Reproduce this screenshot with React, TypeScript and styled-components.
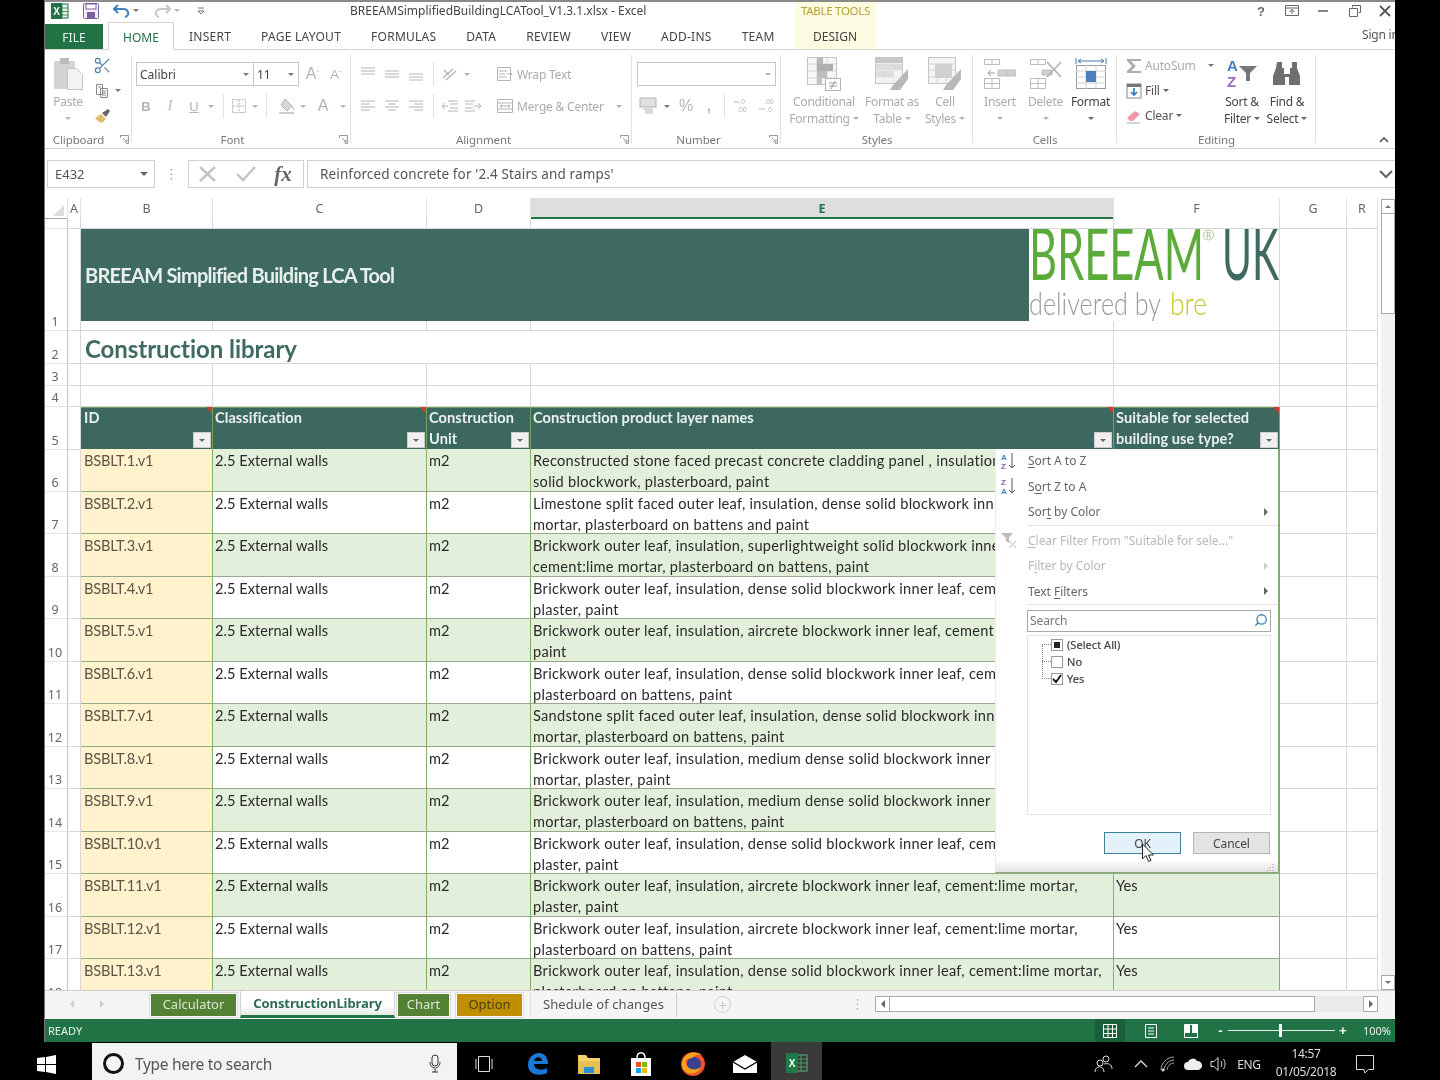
import React from 'react';
import styled, { createGlobalStyle } from 'styled-components';
import { Scissors, Search } from 'lucide-react';

const Global = createGlobalStyle`
  html, body { margin: 0; padding: 0; background: #000; }
  * { box-sizing: border-box; }
`;

const UI = `"Noto Sans", "Open Sans", sans-serif`;
const CELL = `Lato, "Open Sans", sans-serif`;
const COLS = '23px 13px 132px 214px 104px 583px 166px 67px 31px';
const GREY = '#b4b4b4';

const Page = styled.div`
  position: relative; width: 1440px; height: 1080px; background: #000; overflow: hidden;
  display: flex; flex-direction: column; filter: blur(0.3px);
`;
const Win = styled.div`
  width: 1351px; height: 1042px; margin-left: 44px; background: #fff; border-left: 1px solid #777;
  border-top: 2px solid #8a8a8a; display: flex; flex-direction: column; overflow: hidden; font-family: ${UI};
`;
const TitleBar = styled.div`height: 20px; display: flex; align-items: center; flex: none; padding-bottom: 3px;`;
const TitleText = styled.div`width: 582px; padding-left: 137px; font-size: 12px; color: #444; letter-spacing: 0; white-space: nowrap; flex: none;`;
const ToolsTitle = styled.div`width: 81px; height: 20px; align-self: flex-start; padding-bottom: 3px; background: #fdfbe2; color: #b5a035; font-size: 11.5px; letter-spacing: -0.3px; display: flex; align-items: center; justify-content: center; white-space: nowrap; flex: none;`;
const Slot = styled.div<{ $w: number }>`
  width: ${p => p.$w}px; flex: none; display: flex; align-items: center; justify-content: center; height: 100%; color: #555;
`;
const TaskSlot = styled(Slot)`padding-top: 6px;`;
const Controls = styled.div`display: flex; height: 100%; flex: none; margin-left: auto; align-items: center;`;
const TabRow = styled.div`height: 28px; display: flex; align-items: stretch; flex: none; border-bottom: 1px solid #d4d4d4;`;
const FileTab = styled.div`width: 58px; background: #217346; color: #e8f3ec; font-size: 12px; display: flex; align-items: center; justify-content: center; margin-top: 2px; padding-top: 1px;`;
const HomeTab = styled.div`width: 66px; margin-left: 5px; margin-bottom: -1px; padding-top: 2px; background: #fff; color: #217346; font-size: 12px; display: flex; align-items: center; justify-content: center; border: 1px solid #d4d4d4; border-bottom: 1px solid #fff;`;
const RibbonTab = styled.div`padding: 2px 15px 0; font-size: 12px; color: #444; display: flex; align-items: center; letter-spacing: 0.25px; white-space: nowrap;`;
const DesignTab = styled(RibbonTab)`width: 81px; margin-left: 5px; padding: 2px 0 0; justify-content: center; background: #fdfbe2; letter-spacing: 0;`;
const SignIn = styled.div`margin-left: auto; width: 33px; overflow: hidden; font-size: 12px; color: #555; display: flex; align-items: center; padding-bottom: 2px; white-space: nowrap; letter-spacing: -0.2px;`;

const Ribbon = styled.div`height: 99px; flex: none; display: flex; border-bottom: 1px solid #d4d4d4; position: relative;`;
const Group = styled.div<{ $w: number }>`
  width: ${p => p.$w}px; flex: none; display: flex; flex-direction: column; position: relative;
  &::after { content: ''; position: absolute; right: 0; top: 5px; bottom: 5px; width: 1px; background: #e0e0e0; }
`;
const GroupBody = styled.div<{ $pl?: number }>`flex: 1; display: flex; padding-left: ${p => p.$pl ?? 0}px; min-height: 0;`;
const GroupLabel = styled.div<{ $pr?: number }>`height: 17px; flex: none; font-size: 11.5px; color: #777; text-align: center; line-height: 18px; position: relative; letter-spacing: -0.1px; padding-right: ${p => p.$pr ?? 0}px;`;
const Launcher = styled.svg`position: absolute; right: 3px; top: 4px;`;
const Stack = styled.div<{ $w?: number; $pt?: number }>`display: flex; flex-direction: column; ${p => (p.$w ? `width:${p.$w}px;` : '')} padding-top: ${p => p.$pt ?? 0}px; flex: none;`;
const ToolRow = styled.div<{ $mt?: number }>`height: 24px; display: flex; align-items: center; margin-top: ${p => p.$mt ?? 0}px; flex: none;`;
const SmallRow = styled.div`height: 25px; display: flex; align-items: center; flex: none;`;
const Pick = styled.div<{ $w: number; $ml?: number }>`
  width: ${p => p.$w}px; height: 24px; margin-left: ${p => p.$ml ?? 0}px; border: 1px solid #c6c6c6; background: #fff; font-size: 12px; color: #444;
  display: flex; align-items: center; justify-content: space-between; padding: 0 4px 0 3px; flex: none;
`;
const Sep = styled.div`width: 1px; height: 24px; background: #e0e0e0; margin: 0 5px; flex: none;`;
const Caret = styled.span<{ $c?: string; $ml?: number }>`
  display: inline-block; width: 0; height: 0; border-left: 3px solid transparent; border-right: 3px solid transparent;
  border-top: 3px solid ${p => p.$c ?? GREY}; margin-left: ${p => p.$ml ?? 0}px; flex: none;
`;
const BigCaret = styled(Caret)`border-left-width: 4px; border-right-width: 4px; border-top-width: 4px;`;
const UpCaret = styled(Caret)`transform: rotate(180deg);`;
const ToolLabel = styled.span<{ $on?: boolean }>`font-size: 12px; color: ${p => (p.$on ? '#555' : '#ababab')}; white-space: nowrap; display: inline-flex; align-items: center; letter-spacing: -0.2px;`;
const Big = styled.div<{ $w: number }>`width: ${p => p.$w}px; flex: none; display: flex; flex-direction: column; align-items: center; padding-top: 4px;`;
const BigIcon = styled.div`height: 39px; display: flex; align-items: center; justify-content: center;`;
const BigLine = styled.div<{ $on?: boolean }>`height: 17px; line-height: 17px; font-size: 12px; color: ${p => (p.$on ? '#444' : '#ababab')}; white-space: nowrap; display: flex; align-items: center; gap: 3px; letter-spacing: -0.25px;`;
const Glyph = styled.span<{ $b?: boolean; $i?: boolean; $u?: boolean; $s?: number }>`
  font-family: "Liberation Serif", serif; color: ${GREY}; font-size: ${p => p.$s ?? 14}px; font-weight: ${p => (p.$b ? 700 : 400)};
  font-style: ${p => (p.$i ? 'italic' : 'normal')}; text-decoration: ${p => (p.$u ? 'underline' : 'none')};
`;
const SansGlyph = styled(Glyph)`font-family: "Liberation Sans", sans-serif;`;
const Collapse = styled.svg`position: absolute; right: 5px; bottom: 4px;`;

const FormulaZone = styled.div`height: 49px; flex: none; padding: 11px 0 10px 2px; display: flex; align-items: stretch; background: #fff;`;
const NameBox = styled.div`width: 108px; border: 1px solid #d0d0d0; font-size: 13px; color: #555; display: flex; align-items: center; justify-content: space-between; padding: 0 6px 0 7px;`;
const DotsV = styled.div`width: 33px; display: flex; align-items: center; justify-content: center;`;
const FxBox = styled.div`width: 116px; border: 1px solid #d0d0d0; display: flex; align-items: center;`;
const FormulaInput = styled.div`flex: 1; margin-left: 3px; border: 1px solid #d0d0d0; border-right: none; font-size: 13.5px; color: #555; display: flex; align-items: center; justify-content: space-between; padding: 0 2px 0 12px; letter-spacing: 0.13px;`;
const Fx = styled.span`font-family: "Liberation Serif", serif; font-style: italic; font-size: 21px; color: #666; font-weight: 700;`;

const SheetWrap = styled.div`flex: 1; display: flex; min-height: 0;`;
const SheetMain = styled.div`width: 1333px; flex: none; display: flex; flex-direction: column; min-height: 0;`;
const ColHead = styled.div`display: grid; grid-template-columns: ${COLS}; height: 21px; flex: none; border-bottom: 1px solid #a8a8a8; font-family: ${UI};`;
const ColCell = styled.div<{ $on?: boolean }>`
  font-size: 12.5px; display: flex; align-items: center; justify-content: center; padding-bottom: 1px;
  color: ${p => (p.$on ? '#217346' : '#666')}; font-weight: ${p => (p.$on ? 700 : 400)};
  background: ${p => (p.$on ? '#dedede' : '#fff')}; border-right: 1px solid ${p => (p.$on ? '#dedede' : '#e2e2e2')};
  box-shadow: ${p => (p.$on ? 'inset 0 -2px 0 #217346' : 'none')}; height: 21px;
`;
const Corner = styled.div`display: flex; align-items: flex-end; justify-content: flex-end; padding: 0 3px 3px 0; border-right: 1px solid #e2e2e2;`;
const Body = styled.div`flex: 1; overflow: hidden; min-height: 0; position: relative;`;
const Row = styled.div<{ $h: number }>`display: grid; grid-template-columns: ${COLS}; height: ${p => p.$h}px; position: relative;`;
const RowNum = styled.div`font-size: 12.5px; color: #666; display: flex; align-items: flex-end; justify-content: center; border-right: 1px solid #c4c4c4; border-bottom: 1px solid #e6e6e6; font-family: ${UI}; padding-right: 2px; line-height: 17px;`;
const Blank = styled.div`border-right: 1px solid #d8d8d8; border-bottom: 1px solid #d8d8d8; min-width: 0;`;
const Title2 = styled.div`grid-column: 3 / 6; border-bottom: 1px solid #d8d8d8; font: 700 24px ${CELL}; color: #3f6a62; display: flex; align-items: flex-end; padding-left: 4px; white-space: nowrap; letter-spacing: -0.05px; line-height: 28px;`;
const BannerBar = styled.div`position: absolute; left: 36px; top: 0; width: 948px; height: 92px; background: #3f6a62; color: #e8efec; font: 700 20px ${CELL}; display: flex; align-items: center; padding-left: 4px; letter-spacing: -0.75px; white-space: nowrap;`;
const LogoBox = styled.svg`position: absolute; left: 984px; top: 0; background: #fff; font-family: Lato, sans-serif;`;
const HeadCell = styled.div<{ $pl?: number }>`
  position: relative; background: #3c685f; color: #eaf1ee; font: 700 14.6px/21px ${CELL}; padding: 0 0 0 ${p => p.$pl ?? 2}px; white-space: pre-line;
  box-shadow: inset 0 1px 0 #6f9b5f; border-right: 1px solid #70a55a; border-bottom: 1px solid #70a55a; letter-spacing: 0.05px;
`;
const RedMark = styled.div`position: absolute; right: 0; top: 0; width: 0; height: 0; border-top: 6px solid #d23a2a; border-left: 6px solid transparent;`;
const FilterBtn = styled.div`position: absolute; right: 1px; bottom: 1px; width: 18px; height: 16px; background: #f0f0f0; border: 1px solid #ccc; display: flex; align-items: center; justify-content: center;`;
const DataCell = styled.div<{ $bg: string; $c?: string; $ls?: number; $pl?: number }>`
  background: ${p => p.$bg}; color: ${p => p.$c ?? '#2a2a2a'}; font: 400 14.6px/21px ${CELL}; padding: 1px 0 0 ${p => p.$pl ?? 2}px; overflow: hidden; white-space: nowrap;
  letter-spacing: ${p => p.$ls ?? 0}px; border-right: 1px solid #86b06a; border-bottom: 1px solid #97a98a;
`;
const VScroll = styled.div`width: 14px; margin-left: 3px; flex: none; display: flex; flex-direction: column; background: #f2f2f2; padding-top: 1px;`;
const ScrollBtn = styled.div`height: 15px; background: #fff; border: 1px solid #aaa; display: flex; align-items: center; justify-content: center; flex: none;`;
const VThumb = styled.div`height: 100px; background: #fff; border: 1px solid #aaa; border-top: none; flex: none;`;
const VRest = styled.div`flex: 1;`;

const Strip = styled.div`height: 29px; flex: none; display: flex; align-items: flex-start; background: #f5f5f5; border-top: 1px solid #d0d0d0;`;
const NavArrows = styled.div`width: 105px; height: 26px; display: flex; align-items: center; gap: 24px; padding-left: 24px; flex: none;`;
const SheetTab = styled.div<{ $w: number; $bg: string; $c: string; $ml?: number }>`
  width: ${p => p.$w}px; height: 24px; margin-top: 2px; margin-left: ${p => p.$ml ?? 0}px; background: ${p => p.$bg}; color: ${p => p.$c}; font-size: 13px; letter-spacing: 0; padding-bottom: 2px;
  display: flex; align-items: center; justify-content: center; flex: none; white-space: nowrap; border: 1px solid #fff; outline: 1px solid #ddd;
`;
const ActiveTab = styled.div`width: 155px; height: 27px; margin-left: 3px; background: linear-gradient(#fff 60%, #e2ece6); color: #2c6a52; font-size: 13px; font-weight: 700; letter-spacing: -0.08px; display: flex; align-items: center; justify-content: center; border: 1px solid #d4d4d4; border-top: none; border-bottom: 3px solid #217346; flex: none; white-space: nowrap;`;
const PlainTab = styled.div`width: 147px; height: 24px; margin-top: 2px; margin-left: 7px; padding-bottom: 2px; font-size: 13px; color: #555; letter-spacing: 0.09px; display: flex; align-items: center; justify-content: center; border-left: 1px solid #ddd; border-right: 1px solid #ccc; flex: none; white-space: nowrap;`;
const AddSheet = styled.div`width: 17px; height: 17px; margin: 5px 0 0 37px; border-radius: 50%; border: 1.5px solid #d0d0d0; color: #c4c4c4; display: flex; align-items: center; justify-content: center; font: 400 14px/1 "Liberation Sans"; flex: none;`;
const Dots2 = styled.div`margin-left: 118px; width: 16px; height: 26px; display: flex; align-items: center; justify-content: center; flex: none;`;
const HBar = styled.div`width: 503px; height: 16px; margin: 5px 0 0 10px; display: flex; background: #ebebeb; flex: none;`;
const HBtn = styled.div`width: 15px; height: 16px; background: #fff; border: 1px solid #aaa; display: flex; align-items: center; justify-content: center; flex: none;`;
const HThumb = styled.div`width: 425px; background: #fff; border: 1px solid #aaa; border-left: none; flex: none;`;
const HRest = styled.div`flex: 1;`;

const Status = styled.div`height: 23px; flex: none; background: #217346; color: #e6f2ea; display: flex; align-items: center; font-size: 11px; padding: 0 4px 0 3px; letter-spacing: 0;`;
const StatusFill = styled.div`flex: 1;`;
const ViewBtn = styled.div<{ $on?: boolean; $mr?: number }>`width: 30px; height: 23px; margin-right: ${p => p.$mr ?? 0}px; display: flex; align-items: center; justify-content: center; background: ${p => (p.$on ? '#1b5f3a' : 'transparent')}; flex: none;`;
const ZoomTrack = styled.div`width: 107px; height: 1px; background: #e6f2ea; position: relative; flex: none; margin: 0 4px;`;
const ZoomKnob = styled.div`position: absolute; left: 51px; top: -6px; width: 3px; height: 13px; background: #fff;`;
const ZoomSign = styled.span`width: 7px; text-align: center; font: 700 13px/1 "Liberation Sans", sans-serif; color: #fff; flex: none;`;
const ZoomPct = styled.span`width: 45px; text-align: right; flex: none;`;

const Taskbar = styled.div`height: 38px; flex: none; background: #000; display: flex; align-items: center; font-family: ${UI};`;
const SearchBar = styled.div`width: 365px; height: 37px; margin-top: 1px; background: #f3f3f3; display: flex; align-items: center; flex: none; padding: 4px 0 0 11px;`;
const Ring = styled.div`width: 21px; height: 21px; border-radius: 50%; border: 3px solid #111; flex: none;`;
const SearchText = styled.div`margin-left: 11px; font-size: 15.5px; color: #555; flex: 1; letter-spacing: -0.3px; white-space: nowrap;`;
const ActiveApp = styled.div`width: 51px; height: 38px; background: #3a3a3a; padding-top: 4px; display: flex; align-items: center; justify-content: center; flex: none;`;
const Eng = styled.div`font-size: 12px; color: #ddd; letter-spacing: -0.3px;`;
const Clock = styled.div`width: 70px; text-align: center; color: #ddd; font-size: 12px; line-height: 18px; letter-spacing: -0.35px; padding-top: 4px; flex: none;`;

const Dialog = styled.div`
  position: absolute; left: 995px; top: 449px; width: 285px; height: 424px; background: #fff; border-right: 2px solid #82ab6e; border-bottom: 1px solid #82ab6e;
  display: flex; flex-direction: column; font-family: ${UI}; z-index: 5; border-left: 1px solid #ececec;
`;
const MenuItem = styled.div<{ $off?: boolean; $first?: boolean }>`
  height: 25.5px; flex: none; display: flex; align-items: center; color: ${p => (p.$off ? '#b8b8b8' : '#666')}; font-size: 12px; letter-spacing: -0.03px; white-space: nowrap;
  margin-top: ${p => (p.$first ? -1 : 0)}px;
  u { text-underline-offset: 2px; }
`;
const MenuIcon = styled.div`width: 32px; display: flex; align-items: center; justify-content: center; padding-right: 7px; flex: none;`;
const MenuText = styled.div`flex: 1;`;
const SubArrow = styled.span<{ $off?: boolean }>`width: 0; height: 0; border-top: 4px solid transparent; border-bottom: 4px solid transparent; border-left: 4px solid ${p => (p.$off ? '#ccc' : '#666')}; margin-right: 10px;`;
const MenuSep = styled.div<{ $mb?: number }>`height: 1px; flex: none; background: #e4e4e4; margin: 0 0 ${p => p.$mb ?? 0}px 32px;`;
const SearchBox = styled.div`margin: 5px 7px 0 31px; height: 22px; flex: none; border: 1px solid #a9a9a9; font-size: 12px; color: #777; display: flex; align-items: center; justify-content: space-between; padding: 0 2px 2px; letter-spacing: -0.1px;`;
const SearchGlass = styled(Search)`transform: scaleX(-1);`;
const ListBox = styled.div`margin: 3px 7px 0 31px; height: 180px; flex: none; border: 1px solid #e4e4e4; padding-left: 14px; position: relative;`;
const ListRow = styled.div`height: 17px; display: flex; align-items: center; font-size: 11px; color: #444; letter-spacing: 0.05px; position: relative; padding-left: 9px; white-space: nowrap; -webkit-text-stroke: 0.2px #444;`;
const TreeV = styled.div`position: absolute; left: 0; top: 9px; height: 34px; border-left: 1px dotted #888;`;
const TreeH = styled.div`position: absolute; left: 0; top: 8px; width: 9px; border-top: 1px dotted #888;`;
const Check = styled.div`width: 12px; height: 12px; border: 1px solid #999; background: #fff; margin-right: 4px; display: flex; align-items: center; justify-content: center; flex: none;`;
const Mixed = styled.div`width: 6px; height: 6px; background: #222;`;
const Buttons = styled.div`margin: 17px 8px 0 0; height: 22px; display: flex; justify-content: flex-end; gap: 12px; flex: none;`;
const Btn = styled.div<{ $primary?: boolean }>`
  width: 77px; font-size: 12px; color: #444; display: flex; align-items: center; justify-content: center; letter-spacing: -0.1px;
  background: ${p => (p.$primary ? '#e3f1fb' : '#e4e4e4')}; border: 1px solid ${p => (p.$primary ? '#3f8298' : '#b5b5b5')};
`;
const Grip = styled.div`margin-top: 8px; height: 10px; flex: 1; background: linear-gradient(#f8f8f8, #e4e4e4); display: flex; justify-content: flex-end; align-items: flex-end; padding: 0 3px 1px 0;`;
const Pointer = styled.svg`position: absolute; left: 1141px; top: 843px; z-index: 6;`;

const Ico = ({ w = 16, h = 16, children }: { w?: number; h?: number; children: React.ReactNode }) => (
  <svg width={w} height={h} viewBox={`0 0 ${w} ${h}`} fill="none">{children}</svg>
);
const Lines = ({ ys, xs, c = GREY }: { ys: number[]; xs: [number, number][]; c?: string }) => (
  <Ico w={18} h={18}>{ys.map((y, i) => <path key={i} d={`M${xs[i % xs.length][0]} ${y}H${xs[i % xs.length][1]}`} stroke={c} />)}</Ico>
);
const LaunchIco = () => (
  <Launcher width="9" height="9" viewBox="0 0 9 9" fill="none"><path d="M.5 3V.5H8.5V8.5H6M3 3l4 4M7 4.5V7H4.5" stroke="#9a9a9a" /></Launcher>
);
const CondIco = () => (
  <Ico w={34} h={34}>
    <rect x=".5" y=".5" width="29" height="27" fill="#f7f7f7" stroke="#c4c4c4" />
    <path d="M10 .5v27M20 .5v27M.5 7h29M.5 14h29M.5 21h29" stroke="#d6d6d6" />
    <rect x="10" y="1" width="6" height="6" fill="#b9b9b9" /><rect x="10" y="7" width="16" height="7" fill="#b0b0b0" /><rect x="10" y="14" width="10" height="7" fill="#bdbdbd" /><rect x="10" y="21" width="5" height="6" fill="#c4c4c4" />
    <rect x="18.5" y="21.5" width="15" height="12" fill="#fff" stroke="#b4b4b4" /><path d="M22 26h8M22 29h8M28 24l-4 8" stroke="#999" />
  </Ico>
);
const TableIco = ({ fill = false }: { fill?: boolean }) => (
  <Ico w={34} h={34}>
    <rect x=".5" y=".5" width="27" height="26" fill="#f4f4f4" stroke="#c4c4c4" />
    <path d="M9 .5v26M18 .5v26M.5 7h27M.5 13h27M.5 20h27" stroke={fill ? '#e6e6e6' : '#d6d6d6'} />
    <rect x="1" y="1" width="26" height="5" fill={fill ? '#c9c9c9' : '#f4f4f4'} />
    {fill ? <path d="M1 7h26v6H1zM1 14h18v6H1z" fill="#dcdcdc" /> : <rect x="7" y="7" width="17" height="14" fill="#d0d0d0" />}
    <path d="M33 12L22 24c-3 2-5 6-7 9h10l8-11z" fill="#b8b8b8" />
  </Ico>
);
const CellIco = ({ x = false }: { x?: boolean }) => (
  <Ico w={32} h={32}>
    <path d="M.5 1.500h15v5h-15zM8 1.500v5M.5 20.500h15v10h-15zM8 20.500v10M.5 25.500h15" stroke="#bdbdbd" />
    <path d={x ? 'M12 12h10v5H12z' : 'M14 12h18v6H14zM23 12v6'} fill="#d0d0d0" stroke="#bdbdbd" />
    {x && <path d="M17 4l14 15M31 4L17 19" stroke="#b0b0b0" strokeWidth="1.6" />}
    {!x && <path d="M11 15H4M7 12l-3 3 3 3" stroke="#999" />}
  </Ico>
);
const FormatIco = () => (
  <Ico w={32} h={34}>
    <path d="M1 1v6M31 1v6M3 4h26M3 4l3-2M3 4l3 2M29 4l-3-2M29 4l-3 2" stroke="#4a7ba7" />
    <rect x="1.500" y="8.500" width="29" height="23" fill="#fff" stroke="#9a9a9a" />
    <path d="M11 8v24M21 8v24M1 14h30M1 20h30M1 26h30" stroke="#d0d0d0" />
    <rect x="11" y="14" width="10" height="11" fill="#4a7fbc" />
  </Ico>
);
const MenuSortIco = ({ flip }: { flip?: boolean }) => (
  <Ico w={18} h={20}>
    <text x="1" y="9" fontFamily="Liberation Sans" fontWeight="700" fontSize="8" fill={flip ? '#8a5fb0' : '#4a7fbc'}>{flip ? 'Z' : 'A'}</text>
    <text x="1" y="18" fontFamily="Liberation Sans" fontWeight="700" fontSize="8" fill={flip ? '#4a7fbc' : '#8a5fb0'}>{flip ? 'A' : 'Z'}</text>
    <path d="M12 2v15M9 14l3 3 3-3" stroke="#555" />
  </Ico>
);
const WinLogo = () => (
  <Ico w={19} h={19}><path d="M0 3l8-1v7H0zM9 2l10-2v9H9zM0 10h8v7l-8-1zM9 10h10v9l-10-2z" fill="#fff" /></Ico>
);
const ExcelLogo = ({ s = 18 }: { s?: number }) => (
  <svg width={s} height={s} viewBox="0 0 18 18" fill="none">
    <rect x="7" y="2" width="10" height="14" fill="#e9f3ec" stroke="#217346" />
    <path d="M11 2v14M7 6h10M7 9.500h10M7 13h10" stroke="#217346" strokeWidth=".8" />
    <rect x="0" y="1" width="11" height="16" fill="#217346" />
    <text x="5.500" y="13" textAnchor="middle" fontFamily="Liberation Sans" fontWeight="700" fontSize="10" fill="#fff">X</text>
  </svg>
);

const ROWS: [string, string, string][] = [
  ['BSBLT.1.v1', 'Reconstructed stone faced precast concrete cladding panel , insulation', 'solid blockwork, plasterboard, paint'],
  ['BSBLT.2.v1', 'Limestone split faced outer leaf, insulation, dense solid blockwork inn', 'mortar, plasterboard on battens and paint'],
  ['BSBLT.3.v1', 'Brickwork outer leaf, insulation, superlightweight solid blockwork inne', 'cement:lime mortar, plasterboard on battens, paint'],
  ['BSBLT.4.v1', 'Brickwork outer leaf, insulation, dense solid blockwork inner leaf, cem', 'plaster, paint'],
  ['BSBLT.5.v1', 'Brickwork outer leaf, insulation, aircrete blockwork inner leaf, cement', 'paint'],
  ['BSBLT.6.v1', 'Brickwork outer leaf, insulation, dense solid blockwork inner leaf, cem', 'plasterboard on battens, paint'],
  ['BSBLT.7.v1', 'Sandstone split faced outer leaf, insulation, dense solid blockwork inn', 'mortar, plasterboard on battens, paint'],
  ['BSBLT.8.v1', 'Brickwork outer leaf, insulation, medium dense solid blockwork inner', 'mortar, plaster, paint'],
  ['BSBLT.9.v1', 'Brickwork outer leaf, insulation, medium dense solid blockwork inner', 'mortar, plasterboard on battens, paint'],
  ['BSBLT.10.v1', 'Brickwork outer leaf, insulation, dense solid blockwork inner leaf, cem', 'plaster, paint'],
  ['BSBLT.11.v1', 'Brickwork outer leaf, insulation, aircrete blockwork inner leaf, cement:lime mortar,', 'plaster, paint'],
  ['BSBLT.12.v1', 'Brickwork outer leaf, insulation, aircrete blockwork inner leaf, cement:lime mortar,', 'plasterboard on battens, paint'],
  ['BSBLT.13.v1', 'Brickwork outer leaf, insulation, dense solid blockwork inner leaf, cement:lime mortar,', 'plasterboard on battens, paint'],
];

const BlankRow = ({ n, h }: { n: string; h: number }) => (
  <Row $h={h}>
    <RowNum>{n}</RowNum>
    {Array.from({ length: 8 }).map((_, i) => <Blank key={i} />)}
  </Row>
);
const Filter = () => <FilterBtn><Caret $c="#666" /></FilterBtn>;

export default function App() {
  return (
    <Page>
      <Global />
      <Win>
        <TitleBar>
          <Slot $w={30}><ExcelLogo /></Slot>
          <Slot $w={32}><Ico w={16} h={16}><rect x=".5" y=".5" width="15" height="15" rx="1" fill="#f5eef8" stroke="#7b5fa0" /><rect x="3" y="1" width="10" height="5" fill="#fff" stroke="#7b5fa0" /><rect x="4" y="9" width="8" height="6" fill="#7b5fa0" /></Ico></Slot>
          <Slot $w={38}><Ico w={17} h={14}><path d="M5 1L1 5l4 4M1 5h9c6 0 7 7 2 8" stroke="#3f7fbf" strokeWidth="2" /></Ico><Caret $c="#777" $ml={3} /></Slot>
          <Slot $w={44}><Ico w={17} h={14}><path d="M12 1l4 4-4 4M16 5H7c-6 0-7 7-2 8" stroke="#c8c8c8" strokeWidth="2" /></Ico><Caret $ml={3} /></Slot>
          <Slot $w={24}><Ico w={8} h={8}><path d="M1 1h6M1 4l3 3 3-3z" stroke="#777" /></Ico></Slot>
          <TitleText>BREEAMSimplifiedBuildingLCATool_V1.3.1.xlsx - Excel</TitleText>
          <ToolsTitle>TABLE TOOLS</ToolsTitle>
          <Controls>
            <Slot $w={31}><Ico w={10} h={14}><text x="0" y="12" fontFamily="Liberation Sans" fontWeight="700" fontSize="13" fill="#666">?</text></Ico></Slot>
            <Slot $w={30}><Ico w={14} h={12}><path d="M.5.5h13v10H.5zM.5 3h13M7 9V4.500M4.500 7L7 4.500 9.500 7" stroke="#666" /></Ico></Slot>
            <Slot $w={32}><Ico w={10} h={4}><path d="M0 2h10" stroke="#666" strokeWidth="1.6" /></Ico></Slot>
            <Slot $w={31}><Ico w={12} h={12}><path d="M3.500 2.500v-2h8v7h-2M.5 3.500h8v8h-8z" stroke="#666" /></Ico></Slot>
            <Slot $w={5} />
            <Slot $w={20}><Ico w={12} h={12}><path d="M1 1l10 10M11 1L1 11" stroke="#555" strokeWidth="1.8" /></Ico></Slot>
          </Controls>
        </TitleBar>
        <TabRow>
          <FileTab>FILE</FileTab>
          <HomeTab>HOME</HomeTab>
          <RibbonTab>INSERT</RibbonTab>
          <RibbonTab>PAGE LAYOUT</RibbonTab>
          <RibbonTab>FORMULAS</RibbonTab>
          <RibbonTab>DATA</RibbonTab>
          <RibbonTab>REVIEW</RibbonTab>
          <RibbonTab>VIEW</RibbonTab>
          <RibbonTab>ADD-INS</RibbonTab>
          <RibbonTab>TEAM</RibbonTab>
          <DesignTab>DESIGN</DesignTab>
          <SignIn>Sign in</SignIn>
        </TabRow>
        <Ribbon>
          <Group $w={87}>
            <GroupBody>
              <Big $w={46}>
                <BigIcon>
                  <Ico w={30} h={34}>
                    <rect x="1" y="4" width="21" height="28" fill="#d4d4d4" /><rect x="7" y="1" width="9" height="6" fill="#bcbcbc" />
                    <path d="M14.500 11.500h9l6 6v15h-15z" fill="#f4f4f4" stroke="#c4c4c4" />
                  </Ico>
                </BigIcon>
                <BigLine>Paste</BigLine>
                <BigLine><Caret /></BigLine>
              </Big>
              <Stack $w={36} $pt={3}>
                <SmallRow><Slot $w={22}><Scissors size={19} color="#4a7ba7" strokeWidth={1.4} /></Slot></SmallRow>
                <SmallRow>
                  <Slot $w={22}><Ico w={16} h={16}><path d="M2.500 1.500h6v10h-6zM6.500 5.500h7v9h-7zM4 4h3M8 8h4M8 10h4M8 12h4" stroke="#8a8a8a" /></Ico></Slot>
                  <Caret $c="#777" $ml={2} />
                </SmallRow>
                <SmallRow>
                  <Slot $w={22}><Ico w={16} h={16}><path d="M1 10l6-4 5 5-4 4-3-1z" fill="#e2bb6b" /><path d="M8 5l6-4 2 2-4 6z" fill="#666" /></Ico></Slot>
                </SmallRow>
              </Stack>
            </GroupBody>
            <GroupLabel $pr={20}>Clipboard<LaunchIco /></GroupLabel>
          </Group>
          <Group $w={219}>
            <GroupBody $pl={4}>
              <Stack>
                <ToolRow $mt={12}>
                  <Pick $w={118}>Calibri<Caret $c="#777" /></Pick>
                  <Pick $w={46} $ml={-1}>11<Caret $c="#777" /></Pick>
                  <Slot $w={27}><SansGlyph $s={16}>A</SansGlyph><Glyph $s={8}>ˆ</Glyph></Slot>
                  <Slot $w={20}><SansGlyph $s={13}>A</SansGlyph><Glyph $s={8}>ˇ</Glyph></Slot>
                </ToolRow>
                <ToolRow $mt={8}>
                  <Slot $w={20}><SansGlyph $b $s={13}>B</SansGlyph></Slot>
                  <Slot $w={28}><Glyph $i $s={14}>I</Glyph></Slot>
                  <Slot $w={20}><SansGlyph $u $s={13}>U</SansGlyph></Slot>
                  <Slot $w={14}><Caret /></Slot>
                  <Sep />
                  <Slot $w={20}><Ico w={16} h={16}><rect x="1.500" y="1.500" width="13" height="13" stroke={GREY} strokeDasharray="2 1" /><path d="M8 2v12M2 8h12" stroke={GREY} strokeDasharray="2 1" /></Ico></Slot>
                  <Slot $w={12}><Caret /></Slot>
                  <Sep />
                  <Slot $w={5} />
                  <Slot $w={20}><Ico w={18} h={18}><path d="M7 2l7 7-5 5-6-6zM14 9l2 4" fill="#d8d8d8" stroke={GREY} /><rect x="1" y="15" width="15" height="2" fill="#cfcfcf" /></Ico></Slot>
                  <Slot $w={12}><Caret /></Slot>
                  <Slot $w={28}><SansGlyph $s={16}>A</SansGlyph></Slot>
                  <Slot $w={12}><Caret /></Slot>
                </ToolRow>
              </Stack>
            </GroupBody>
            <GroupLabel $pr={18}>Font<LaunchIco /></GroupLabel>
          </Group>
          <Group $w={281}>
            <GroupBody $pl={5}>
              <Stack>
                <ToolRow $mt={12}>
                  <Slot $w={24}><Lines ys={[3, 6, 9]} xs={[[2, 16]]} /></Slot>
                  <Slot $w={24}><Lines ys={[6, 9, 12]} xs={[[2, 16]]} /></Slot>
                  <Slot $w={24}><Lines ys={[9, 12, 15]} xs={[[2, 16]]} /></Slot>
                  <Sep />
                  <Slot $w={22}><Ico w={18} h={16}><path d="M2 12L12 3M5 14l10-9M3 4l5 5" stroke={GREY} strokeWidth="1.4" /></Ico></Slot>
                  <Slot $w={12}><Caret /></Slot>
                  <Slot $w={20} />
                  <Slot $w={24}><Ico w={18} h={18}><path d="M1.500 2.500h13v13h-13zM3 6h8M3 9h6M3 12h8M11 9h5l-2-2M16 9l-2 2" stroke={GREY} /></Ico></Slot>
                  <ToolLabel>Wrap Text</ToolLabel>
                </ToolRow>
                <ToolRow $mt={8}>
                  <Slot $w={24}><Lines ys={[4, 7, 10, 13]} xs={[[2, 16], [2, 11]]} /></Slot>
                  <Slot $w={24}><Lines ys={[4, 7, 10, 13]} xs={[[2, 16], [5, 13]]} /></Slot>
                  <Slot $w={24}><Lines ys={[4, 7, 10, 13]} xs={[[2, 16], [7, 16]]} /></Slot>
                  <Sep />
                  <Slot $w={22}><Ico w={18} h={16}><path d="M7 3h10M9 6h8M9 10h8M7 13h10M7 8H1m3-3L1 8l3 3" stroke={GREY} /></Ico></Slot>
                  <Slot $w={24}><Ico w={18} h={16}><path d="M1 3h10M1 6h8M1 10h8M1 13h10M10 8h7m-3-3l3 3-3 3" stroke={GREY} /></Ico></Slot>
                  <Slot $w={8} />
                  <Slot $w={24}><Ico w={18} h={18}><path d="M1.500 2.500h15v13h-15zM1.500 6h15M1.500 12h15M4 9h10M4 9l2-1.500M4 9l2 1.500M14 9l-2-1.500M14 9l-2 1.500" stroke={GREY} /></Ico></Slot>
                  <ToolLabel>Merge &amp; Center<Caret $ml={12} /></ToolLabel>
                </ToolRow>
              </Stack>
            </GroupBody>
            <GroupLabel $pr={16}>Alignment<LaunchIco /></GroupLabel>
          </Group>
          <Group $w={149}>
            <GroupBody $pl={5}>
              <Stack>
                <ToolRow $mt={12}><Pick $w={139}><span /><Caret /></Pick></ToolRow>
                <ToolRow $mt={8}>
                  <Slot $w={24}><Ico w={20} h={18}><rect x="1" y="1" width="16" height="9" fill="#e0e0e0" stroke={GREY} /><path d="M4 12h10M6 14h8M6 16h8" stroke={GREY} /></Ico></Slot>
                  <Slot $w={12}><Caret $c="#777" /></Slot>
                  <Slot $w={26}><SansGlyph $s={16}>%</SansGlyph></Slot>
                  <Slot $w={20}><SansGlyph $b $s={14}>,</SansGlyph></Slot>
                  <Sep />
                  <Slot $w={26}><Ico w={20} h={16}><text x="6" y="6" fontSize="7" fontFamily="Liberation Sans" fill={GREY}>.0</text><text x="4" y="14" fontSize="7" fontFamily="Liberation Sans" fill={GREY}>.00</text><path d="M1 4h5" stroke={GREY} /></Ico></Slot>
                  <Slot $w={24}><Ico w={20} h={16}><text x="6" y="6" fontSize="7" fontFamily="Liberation Sans" fill={GREY}>.00</text><text x="8" y="14" fontSize="7" fontFamily="Liberation Sans" fill={GREY}>.0</text><path d="M1 11h6" stroke={GREY} /></Ico></Slot>
                </ToolRow>
              </Stack>
            </GroupBody>
            <GroupLabel $pr={16}>Number<LaunchIco /></GroupLabel>
          </Group>
          <Group $w={192}>
            <GroupBody $pl={6}>
              <Big $w={74}><BigIcon><CondIco /></BigIcon><BigLine>Conditional</BigLine><BigLine>Formatting<Caret /></BigLine></Big>
              <Big $w={62}><BigIcon><TableIco fill /></BigIcon><BigLine>Format as</BigLine><BigLine>Table<Caret /></BigLine></Big>
              <Big $w={44}><BigIcon><TableIco /></BigIcon><BigLine>Cell</BigLine><BigLine>Styles<Caret /></BigLine></Big>
            </GroupBody>
            <GroupLabel>Styles</GroupLabel>
          </Group>
          <Group $w={144}>
            <GroupBody $pl={4}>
              <Big $w={46}><BigIcon><CellIco /></BigIcon><BigLine>Insert</BigLine><BigLine><Caret /></BigLine></Big>
              <Big $w={45}><BigIcon><CellIco x /></BigIcon><BigLine>Delete</BigLine><BigLine><Caret /></BigLine></Big>
              <Big $w={45}><BigIcon><FormatIco /></BigIcon><BigLine $on>Format</BigLine><BigLine><Caret $c="#666" /></BigLine></Big>
            </GroupBody>
            <GroupLabel>Cells</GroupLabel>
          </Group>
          <Group $w={199}>
            <GroupBody $pl={6}>
              <Stack $w={96} $pt={3}>
                <SmallRow>
                  <Slot $w={22}><Ico w={18} h={18}><path d="M2 2h14v2H6l5 5-5 5h10v2H2v-2l5-5-5-5z" fill="#adadad" /></Ico></Slot>
                  <ToolLabel>AutoSum<Caret $c="#777" $ml={12} /></ToolLabel>
                </SmallRow>
                <SmallRow>
                  <Slot $w={22}><Ico w={16} h={16}><rect x="1" y="1" width="14" height="14" fill="#fff" stroke="#888" /><rect x="1" y="1" width="14" height="3" fill="#777" /><path d="M8 5v7M5 9l3 3 3-3" stroke="#2e75b6" strokeWidth="1.6" /></Ico></Slot>
                  <ToolLabel $on>Fill<Caret $c="#666" $ml={3} /></ToolLabel>
                </SmallRow>
                <SmallRow>
                  <Slot $w={22}><Ico w={16} h={16}><path d="M1 10l8-7 5 3-7 7H4z" fill="#ec9aa9" /><path d="M1 15h13" stroke="#aaa" /></Ico></Slot>
                  <ToolLabel $on>Clear<Caret $c="#666" $ml={3} /></ToolLabel>
                </SmallRow>
              </Stack>
              <Big $w={46}>
                <BigIcon>
                  <Ico w={32} h={32}>
                    <text x="1" y="13" fontFamily="Liberation Sans" fontWeight="700" fontSize="15" fill="#3f7fbf">A</text>
                    <text x="1" y="29" fontFamily="Liberation Sans" fontWeight="700" fontSize="15" fill="#9a6ac0">Z</text>
                    <path d="M13 8h18l-7 7v8h-4v-8z" fill="#777" />
                  </Ico>
                </BigIcon>
                <BigLine $on>Sort &amp;</BigLine><BigLine $on>Filter<Caret $c="#666" /></BigLine>
              </Big>
              <Big $w={44}>
                <BigIcon>
                  <Ico w={30} h={26}>
                    <path d="M5 1h5v6h2v6h6V7h2V1h5v6l3 8v9H17V16h-4v8H1v-9l3-8z" fill="#6f6f6f" />
                  </Ico>
                </BigIcon>
                <BigLine $on>Find &amp;</BigLine><BigLine $on>Select<Caret $c="#666" /></BigLine>
              </Big>
            </GroupBody>
            <GroupLabel>Editing</GroupLabel>
          </Group>
          <Collapse width="12" height="8" viewBox="0 0 12 8" fill="none"><path d="M2 6l4-4 4 4" stroke="#555" strokeWidth="1.6" /></Collapse>
        </Ribbon>
        <FormulaZone>
          <NameBox>E432<BigCaret $c="#666" /></NameBox>
          <DotsV><Ico w={3} h={12}><path d="M1.500 1v1.500M1.500 5.500V7M1.500 10v1.500" stroke="#999" strokeWidth="1.4" /></Ico></DotsV>
          <FxBox>
            <Slot $w={37}><Ico w={20} h={18}><path d="M2 2l15 14M17 2L2 16" stroke="#c4c4c4" strokeWidth="2.400" /></Ico></Slot>
            <Slot $w={39}><Ico w={22} h={18}><path d="M2 9l6 6L20 2" stroke="#c4c4c4" strokeWidth="2.400" /></Ico></Slot>
            <Slot $w={36}><Fx>fx</Fx></Slot>
          </FxBox>
          <FormulaInput>
            Reinforced concrete for '2.4 Stairs and ramps'
            <Ico w={14} h={10}><path d="M1 2l6 6 6-6" stroke="#666" strokeWidth="2.200" /></Ico>
          </FormulaInput>
        </FormulaZone>
        <SheetWrap>
          <SheetMain>
            <ColHead>
              <Corner><Ico w={11} h={11}><path d="M11 0v11H0z" fill="#dcdcdc" /></Ico></Corner>
              <ColCell>A</ColCell>
              <ColCell>B</ColCell>
              <ColCell>C</ColCell>
              <ColCell>D</ColCell>
              <ColCell $on>E</ColCell>
              <ColCell>F</ColCell>
              <ColCell>G</ColCell>
              <ColCell>R</ColCell>
            </ColHead>
            <Body>
              <BlankRow n="" h={10} />
              <Row $h={102}>
                <RowNum>1</RowNum>
                {Array.from({ length: 8 }).map((_, i) => <Blank key={i} />)}
                <BannerBar>BREEAM Simplified Building LCA Tool</BannerBar>
                <LogoBox width="250" height="92" viewBox="0 0 250 92">
                  <text x="0" y="51" fontSize="71" fontWeight="400" fill="#5cab3a" textLength="175" lengthAdjust="spacingAndGlyphs">BREEAM</text>
                  <circle cx="179.500" cy="6" r="5" fill="none" stroke="#a9cf8d" />
                  <text x="179.500" y="9" textAnchor="middle" fontSize="8" fill="#8ebc6c">R</text>
                  <text x="193" y="51" fontSize="71" fontWeight="400" fill="#3f6a62" textLength="57" lengthAdjust="spacingAndGlyphs">UK</text>
                  <text x="0" y="86" fontSize="31" fontWeight="300" fill="#9a9a9a" textLength="132" lengthAdjust="spacingAndGlyphs">delivered by</text>
                  <text x="141" y="86" fontSize="31" fontWeight="300" fill="#c6c82e" textLength="37" lengthAdjust="spacingAndGlyphs">bre</text>
                </LogoBox>
              </Row>
              <Row $h={33}>
                <RowNum>2</RowNum>
                <Blank />
                <Title2>Construction library</Title2>
                <Blank />
                <Blank />
                <Blank />
                <Blank />
              </Row>
              <BlankRow n="3" h={22} />
              <BlankRow n="4" h={21} />
              <Row $h={42}>
                <RowNum>5</RowNum>
                <Blank />
                <HeadCell $pl={3}>ID<RedMark /><Filter /></HeadCell>
                <HeadCell>Classification<RedMark /><Filter /></HeadCell>
                <HeadCell>{'Construction\nUnit'}<Filter /></HeadCell>
                <HeadCell>Construction product layer names<RedMark /><Filter /></HeadCell>
                <HeadCell>{'Suitable for selected\nbuilding use type?'}<RedMark /><Filter /></HeadCell>
                <Blank />
                <Blank />
              </Row>
              {ROWS.map((r, i) => {
                const bg = i % 2 === 0 ? '#e2efda' : '#ffffff';
                return (
                  <Row $h={42.5} key={r[0]}>
                    <RowNum>{i + 6}</RowNum>
                    <Blank />
                    <DataCell $bg="#fff2cc" $c="#5f5549" $ls={-0.2} $pl={3}>{r[0]}</DataCell>
                    <DataCell $bg={bg} $ls={0.05}>2.5 External walls</DataCell>
                    <DataCell $bg={bg}>m2</DataCell>
                    <DataCell $bg={bg} $ls={0.27}>{r[1]}<br />{r[2]}</DataCell>
                    <DataCell $bg={bg}>Yes</DataCell>
                    <Blank />
                    <Blank />
                  </Row>
                );
              })}
            </Body>
          </SheetMain>
          <VScroll>
            <ScrollBtn><UpCaret $c="#777" /></ScrollBtn>
            <VThumb />
            <VRest />
            <ScrollBtn><Caret $c="#777" /></ScrollBtn>
          </VScroll>
        </SheetWrap>
        <Strip>
          <NavArrows>
            <Ico w={6} h={8}><path d="M5 0v8L1 4z" fill="#ccc" /></Ico>
            <Ico w={6} h={8}><path d="M1 0v8l4-4z" fill="#ccc" /></Ico>
          </NavArrows>
          <SheetTab $w={87} $bg="#548235" $c="#dbe6d2">Calculator</SheetTab>
          <ActiveTab>ConstructionLibrary</ActiveTab>
          <SheetTab $w={53} $ml={2} $bg="#548235" $c="#dbe6d2">Chart</SheetTab>
          <SheetTab $w={67} $ml={6} $bg="#bf8f00" $c="#4c3f10">Option</SheetTab>
          <PlainTab>Shedule of changes</PlainTab>
          <AddSheet>+</AddSheet>
          <Dots2><Ico w={3} h={12}><path d="M1.500 1v1.500M1.500 5.500V7M1.500 10v1.500" stroke="#aaa" strokeWidth="1.4" /></Ico></Dots2>
          <HBar>
            <HBtn><Ico w={6} h={8}><path d="M5 0v8L1 4z" fill="#666" /></Ico></HBtn>
            <HThumb />
            <HRest />
            <HBtn><Ico w={6} h={8}><path d="M1 0v8l4-4z" fill="#666" /></Ico></HBtn>
          </HBar>
        </Strip>
        <Status>
          READY
          <StatusFill />
          <ViewBtn $on $mr={11}><Ico w={14} h={14}><path d="M.5.5h13v13H.5zM5 .5v13M9.500.5v13M.5 5h13M.5 9.500h13" stroke="#fff" /></Ico></ViewBtn>
          <ViewBtn $mr={10}><Ico w={14} h={14}><path d="M1.500.5h11v13h-11zM4 4h6M4 7h6M4 10h6" stroke="#fff" /></Ico></ViewBtn>
          <ViewBtn $mr={11}><Ico w={14} h={14}><path d="M.5.5h13v13H.5z" stroke="#fff" /><path d="M1 1h5v8H1zM8 1h5v8H8z" fill="#fff" /></Ico></ViewBtn>
          <ZoomSign>-</ZoomSign>
          <ZoomTrack><ZoomKnob /></ZoomTrack>
          <ZoomSign>+</ZoomSign>
          <ZoomPct>100%</ZoomPct>
        </Status>
      </Win>
      <Taskbar>
        <TaskSlot $w={92}><WinLogo /></TaskSlot>
        <SearchBar>
          <Ring />
          <SearchText>Type here to search</SearchText>
          <Slot $w={44}><Ico w={12} h={19}><rect x="3" y="1" width="6" height="11" rx="3" stroke="#333" /><path d="M1 8c0 8 10 8 10 0M6 15v3M3 18h6" stroke="#333" /></Ico></Slot>
        </SearchBar>
        <TaskSlot $w={54}><Ico w={22} h={18}><path d="M5.500 1.500h11v15h-11zM3 4v10M19 4v10" stroke="#ddd" /></Ico></TaskSlot>
        <TaskSlot $w={52}>
          <Ico w={26} h={26}><path d="M4 14C4 6 10 2 15 2c6 0 9 5 9 11H10c0 6 8 7 13 4v5c-6 3-19 3-19-8zM10 10h8c0-5-7-5-8 0z" fill="#1a78d6" /></Ico>
        </TaskSlot>
        <TaskSlot $w={52}>
          <Ico w={24} h={22}><path d="M1 2h8l2 3h12v16H1z" fill="#f6d26b" /><path d="M1 8h22v13H1z" fill="#e8bf55" /><rect x="7" y="14" width="10" height="6" fill="#2d8fd5" /></Ico>
        </TaskSlot>
        <TaskSlot $w={52}>
          <Ico w={24} h={26}><path d="M2 7h20v18H2z" fill="#fff" /><path d="M8 7c0-7 8-7 8 0" stroke="#fff" strokeWidth="1.500" /><rect x="7" y="11" width="5" height="5" fill="#f25022" /><rect x="13" y="11" width="5" height="5" fill="#7fba00" /><rect x="7" y="17" width="5" height="5" fill="#00a4ef" /><rect x="13" y="17" width="5" height="5" fill="#ffb900" /></Ico>
        </TaskSlot>
        <TaskSlot $w={52}>
          <Ico w={26} h={26}><circle cx="13" cy="13" r="12" fill="#e8552c" /><circle cx="14" cy="13" r="7" fill="#3b3f8f" /><path d="M2 12C4 2 14-1 22 4c-4-1-8 0-10 3-3 0-7 1-6 6 2 6 10 7 15 3-2 6-10 9-16 4-3-2-3-5-3-8z" fill="#f7a11a" /></Ico>
        </TaskSlot>
        <TaskSlot $w={52}>
          <Ico w={26} h={20}><path d="M1 8l12-7 12 7v11H1z" fill="#fff" /><path d="M1 8l12 7 12-7" stroke="#000" strokeWidth="1.400" /></Ico>
        </TaskSlot>
        <ActiveApp>
          <Ico w={22} h={20}>
            <rect x="9" y="2" width="12" height="16" stroke="#4fb37c" /><path d="M15 2v16M9 6h12M9 10h12M9 14h12" stroke="#4fb37c" strokeWidth=".8" />
            <rect x="0" y="0" width="12" height="20" fill="#1f7a48" /><text x="6" y="14" textAnchor="middle" fontFamily="Liberation Sans" fontWeight="700" fontSize="10" fill="#fff">X</text>
          </Ico>
        </ActiveApp>
        <Slot $w={264} />
        <TaskSlot $w={36}><Ico w={20} h={20}><circle cx="12" cy="5" r="3" stroke="#ddd" /><circle cx="6" cy="9" r="3" stroke="#ddd" /><path d="M1 18c0-7 9-7 9 0M10 10c4-1 8 0 8 5" stroke="#ddd" /></Ico></TaskSlot>
        <TaskSlot $w={38}><Ico w={14} h={8}><path d="M1 7l6-6 6 6" stroke="#ddd" strokeWidth="1.300" /></Ico></TaskSlot>
        <TaskSlot $w={16}><Ico w={16} h={16}><path d="M1 14c0-7 6-13 13-13M4 14c0-5 5-10 10-10M7 14c0-3 3-7 7-7" stroke="#aaa" /><circle cx="3" cy="14" r="1.500" fill="#ddd" /></Ico></TaskSlot>
        <TaskSlot $w={34}><Ico w={18} h={12}><path d="M4 12a4 4 0 010-8 5 5 0 019-1 4 4 0 011 9z" fill="#eee" /></Ico></TaskSlot>
        <TaskSlot $w={17}><Ico w={17} h={16}><path d="M1 5.500h3l4-4v13l-4-4H1zM11 5c1 2 1 4 0 6M13.500 3c2 3 2 7 0 10" stroke="#ddd" /></Ico></TaskSlot>
        <TaskSlot $w={44}><Eng>ENG</Eng></TaskSlot>
        <Clock>14:57<br />01/05/2018</Clock>
        <TaskSlot $w={48}><Ico w={20} h={20}><path d="M1.500 1.500h17v14h-5l-3.500 3.500-1-3.500h-7.500z" stroke="#ddd" /></Ico></TaskSlot>
      </Taskbar>

      <Dialog>
        <MenuItem $first><MenuIcon><MenuSortIco /></MenuIcon><MenuText><u>S</u>ort A to Z</MenuText></MenuItem>
        <MenuItem><MenuIcon><MenuSortIco flip /></MenuIcon><MenuText>S<u>o</u>rt Z to A</MenuText></MenuItem>
        <MenuItem><MenuIcon /><MenuText>Sor<u>t</u> by Color</MenuText><SubArrow /></MenuItem>
        <MenuSep $mb={2} />
        <MenuItem $off>
          <MenuIcon><Ico w={18} h={18}><path d="M1 2h12L9 7v5L6 10V7z" fill="#bdbdbd" /><path d="M9 10l7 7M16 10l-7 7" stroke="#bdbdbd" /></Ico></MenuIcon>
          <MenuText><u>C</u>lear Filter From "Suitable for sele..."</MenuText>
        </MenuItem>
        <MenuItem $off><MenuIcon /><MenuText>F<u>i</u>lter by Color</MenuText><SubArrow $off /></MenuItem>
        <MenuItem><MenuIcon /><MenuText>Text <u>F</u>ilters</MenuText><SubArrow /></MenuItem>
        <MenuSep />
        <SearchBox>Search<SearchGlass size={14} color="#3f7fa8" strokeWidth={2.2} /></SearchBox>
        <ListBox>
          <ListRow><TreeV /><TreeH /><Check><Mixed /></Check>(Select All)</ListRow>
          <ListRow><TreeH /><Check />No</ListRow>
          <ListRow><TreeH /><Check><Ico w={10} h={10}><path d="M1 5l3 3 5-7" stroke="#111" strokeWidth="1.800" /></Ico></Check>Yes</ListRow>
        </ListBox>
        <Buttons>
          <Btn $primary>OK</Btn>
          <Btn>Cancel</Btn>
        </Buttons>
        <Grip><Ico w={8} h={8}><path d="M6 1v1M3 4v1M6 4v1M0.500 7v1M3 7v1M6 7v1" stroke="#999" /></Ico></Grip>
      </Dialog>
      <Pointer width="14" height="22" viewBox="0 0 14 22"><path d="M1.500 1v15l3.500-3.500 2.500 6 2.500-1-2.500-5.500h5z" fill="#fff" stroke="#222" /></Pointer>
    </Page>
  );
}
